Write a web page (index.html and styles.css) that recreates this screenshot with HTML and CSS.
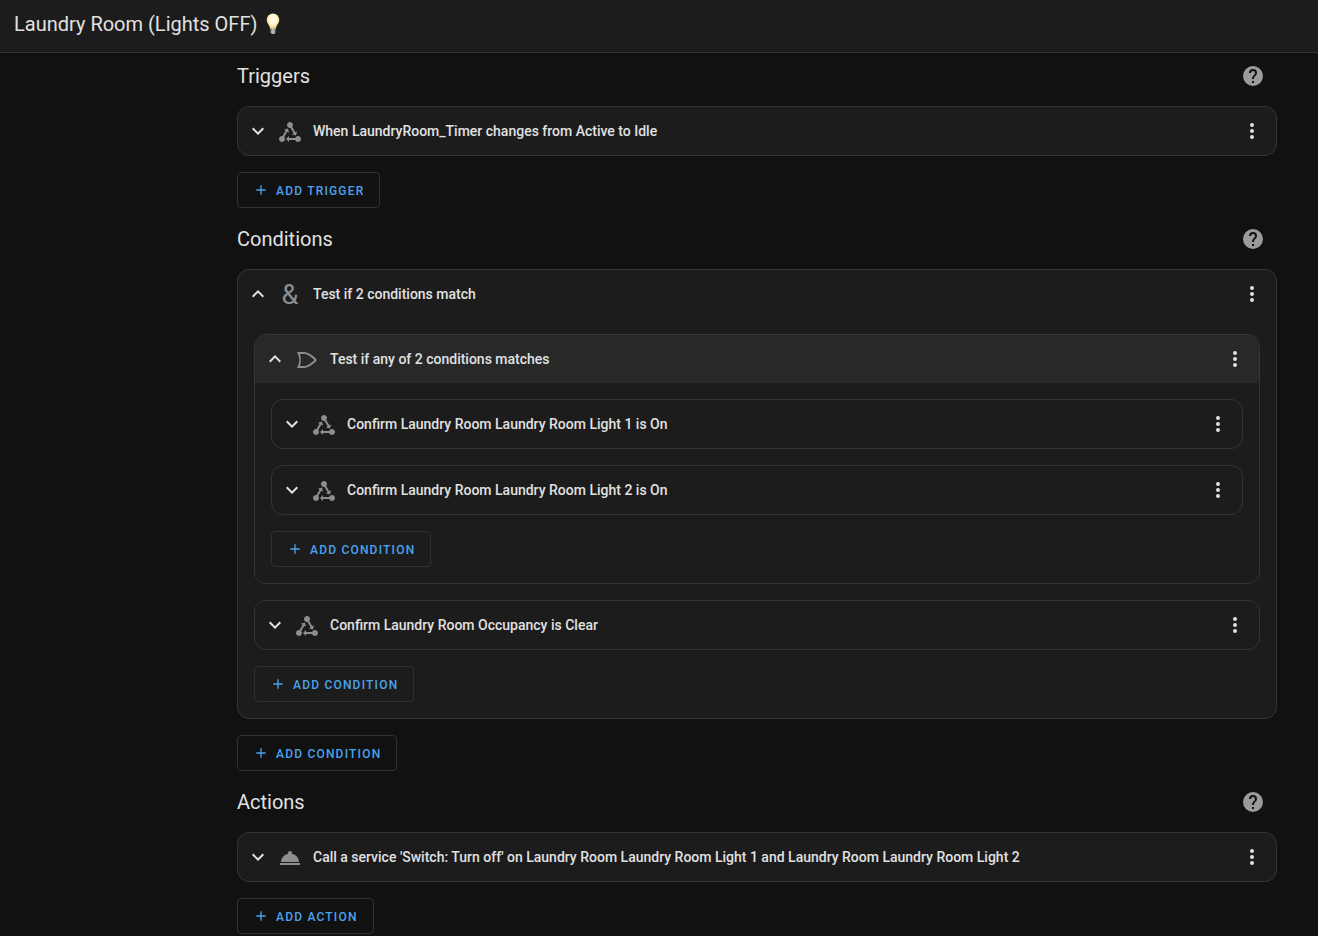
FILE: index.html
```html
<!DOCTYPE html>
<html lang="en">
<head>
<meta charset="utf-8">
<meta name="viewport" content="width=device-width, initial-scale=1">
<title>Laundry Room (Lights OFF)</title>
<link rel="stylesheet" href="styles.css">
</head>
<body>
<svg class="sprite" aria-hidden="true">
  <symbol id="down" viewBox="0 0 24 24"><path d="M7.41 8.58L12 13.17l4.59-4.59L18 10l-6 6-6-6 1.41-1.42z"/></symbol>
  <symbol id="up" viewBox="0 0 24 24"><path d="M7.41 15.41L12 10.83l4.59 4.58L18 14l-6-6-6 6 1.41 1.41z"/></symbol>
  <symbol id="dots" viewBox="0 0 24 24"><path d="M12 16a2 2 0 1 1 0 4 2 2 0 0 1 0-4m0-6a2 2 0 1 1 0 4 2 2 0 0 1 0-4m0-6a2 2 0 1 1 0 4 2 2 0 0 1 0-4z"/></symbol>
  <symbol id="plus" viewBox="0 0 24 24"><path d="M19 13h-6v6h-2v-6H5v-2h6V5h2v6h6v2z"/></symbol>
  <symbol id="help" viewBox="0 0 24 24"><path d="M15.07 11.25l-.9.92C13.45 12.89 13 13.5 13 15h-2v-.5c0-1.11.45-2.11 1.17-2.83l1.24-1.26c.37-.36.59-.86.59-1.41a2 2 0 0 0-4 0H8a4 4 0 0 1 8 0c0 .88-.36 1.67-.93 2.25M13 19h-2v-2h2M12 2a10 10 0 1 0 0 20 10 10 0 0 0 0-20z"/></symbol>
  <symbol id="state" viewBox="0 0 24 24"><path d="M6.27 17.05C6.72 17.58 7 18.25 7 19C7 20.66 5.66 22 4 22S1 20.66 1 19 2.34 16 4 16C4.18 16 4.36 16 4.53 16.05L7.6 10.69L5.86 9.7L9.95 8.58L11.07 12.67L9.33 11.68L6.27 17.05M20 16C18.7 16 17.6 16.84 17.18 18H11V16L8 19L11 22V20H17.18C17.6 21.16 18.7 22 20 22C21.66 22 23 20.66 23 19S21.66 16 20 16M12 8C12.18 8 12.36 8 12.53 7.95L15.6 13.31L13.86 14.3L17.95 15.42L19.07 11.33L17.33 12.32L14.27 6.95C14.72 6.42 15 5.75 15 5C15 3.34 13.66 2 12 2S9 3.34 9 5 10.34 8 12 8Z"/></symbol>
  <symbol id="or" viewBox="0 0 24 24"><path d="M2 4C5 10 5 14 2 20H9C13 20 19 16 22 12C19 8 13 4 9 4H2M5 6H9C11.9 6 16.5 8.7 19.3 12C16.5 15.3 12 18 9 18H5C6 14 6 10 5 6Z"/></symbol>
  <symbol id="service" viewBox="0 0 24 24"><path d="M12 5a2 2 0 0 1 2 2c0 .24-.04.47-.12.69C17.95 8.5 21 11.91 21 16H3c0-4.09 3.05-7.5 7.12-8.31A2 2 0 0 1 12 5M22 19H2v-2h20v2z"/></symbol>
</svg>
<header class="topbar">
  <h1 class="title">Laundry Room (Lights OFF)</h1>
  <svg class="bulb" viewBox="0 0 14 22" aria-hidden="true">
    <defs>
      <radialGradient id="glow" cx=".5" cy=".4" r=".6"><stop offset="0" stop-color="#fffef6"/><stop offset=".55" stop-color="#fff4cd"/><stop offset="1" stop-color="#e9c56a"/></radialGradient>
      <linearGradient id="cap"><stop offset="0" stop-color="#6f6f6c"/><stop offset=".5" stop-color="#c9c9c4"/><stop offset="1" stop-color="#6f6f6c"/></linearGradient>
    </defs>
    <path fill="url(#glow)" d="M7 .5a6.3 6.3 0 0 1 6.3 6.3c0 3.6-3 5.2-3.4 9.2H4.1C3.700 12 .7 10.400 .7 6.800A6.300 6.300 0 0 1 7 .5z"/>
    <path fill="url(#cap)" d="M4.300 15.500h5.400v4L8.500 21h-3l-1.200-1.500z"/>
  </svg>
</header>
<main class="page">
  <div class="content">
    <section class="section">
      <div class="section-head"><h2 class="heading">Triggers</h2><button class="icon-button help" aria-label="Help with triggers"><svg class="icon"><use href="#help"/></svg></button></div>
      <div class="stack">
        <article class="card"><div class="row"><button class="toggle" aria-label="Expand"><svg class="icon"><use href="#down"/></svg></button><svg class="icon kind"><use href="#state"/></svg><h3 class="label">When LaundryRoom_Timer changes from Active to Idle</h3><button class="icon-button" aria-label="Menu"><svg class="icon"><use href="#dots"/></svg></button></div></article>
        <button class="add"><svg class="add-icon"><use href="#plus"/></svg>Add trigger</button>
      </div>
    </section>
    <section class="section">
      <div class="section-head"><h2 class="heading">Conditions</h2><button class="icon-button help" aria-label="Help with conditions"><svg class="icon"><use href="#help"/></svg></button></div>
      <div class="stack">
        <article class="card">
          <div class="row"><button class="toggle" aria-label="Collapse"><svg class="icon"><use href="#up"/></svg></button><span class="kind ampersand" aria-hidden="true">&amp;</span><h3 class="label">Test if 2 conditions match</h3><button class="icon-button" aria-label="Menu"><svg class="icon"><use href="#dots"/></svg></button></div>
          <div class="stack inner">
            <article class="card">
              <div class="row raised"><button class="toggle" aria-label="Collapse"><svg class="icon"><use href="#up"/></svg></button><svg class="icon kind"><use href="#or"/></svg><h3 class="label">Test if any of 2 conditions matches</h3><button class="icon-button" aria-label="Menu"><svg class="icon"><use href="#dots"/></svg></button></div>
              <div class="stack inner">
                <article class="card"><div class="row"><button class="toggle" aria-label="Expand"><svg class="icon"><use href="#down"/></svg></button><svg class="icon kind"><use href="#state"/></svg><h3 class="label">Confirm Laundry Room Laundry Room Light 1 is On</h3><button class="icon-button" aria-label="Menu"><svg class="icon"><use href="#dots"/></svg></button></div></article>
                <article class="card"><div class="row"><button class="toggle" aria-label="Expand"><svg class="icon"><use href="#down"/></svg></button><svg class="icon kind"><use href="#state"/></svg><h3 class="label">Confirm Laundry Room Laundry Room Light 2 is On</h3><button class="icon-button" aria-label="Menu"><svg class="icon"><use href="#dots"/></svg></button></div></article>
                <button class="add"><svg class="add-icon"><use href="#plus"/></svg>Add condition</button>
              </div>
            </article>
            <article class="card"><div class="row"><button class="toggle" aria-label="Expand"><svg class="icon"><use href="#down"/></svg></button><svg class="icon kind"><use href="#state"/></svg><h3 class="label">Confirm Laundry Room Occupancy is Clear</h3><button class="icon-button" aria-label="Menu"><svg class="icon"><use href="#dots"/></svg></button></div></article>
            <button class="add"><svg class="add-icon"><use href="#plus"/></svg>Add condition</button>
          </div>
        </article>
        <button class="add"><svg class="add-icon"><use href="#plus"/></svg>Add condition</button>
      </div>
    </section>
    <section class="section">
      <div class="section-head"><h2 class="heading">Actions</h2><button class="icon-button help" aria-label="Help with actions"><svg class="icon"><use href="#help"/></svg></button></div>
      <div class="stack">
        <article class="card"><div class="row"><button class="toggle" aria-label="Expand"><svg class="icon"><use href="#down"/></svg></button><svg class="icon kind"><use href="#service"/></svg><h3 class="label">Call a service 'Switch: Turn off' on Laundry Room Laundry Room Light 1 and Laundry Room Laundry Room Light 2</h3><button class="icon-button" aria-label="Menu"><svg class="icon"><use href="#dots"/></svg></button></div></article>
        <button class="add"><svg class="add-icon"><use href="#plus"/></svg>Add action</button>
      </div>
    </section>
  </div>
</main>
</body>
</html>
```

FILE: styles.css
```css
* { box-sizing: border-box; }
body {
  margin: 0;
  background: #111111;
  color: #e1e1e1;
  font-family: Roboto, sans-serif;
  font-size: 14px;
}
button { margin: 0; padding: 0; border: 0; background: none; color: inherit; font: inherit; cursor: pointer; }
h1, h2, h3 { margin: 0; }
.sprite { display: none; }
.icon { display: block; width: 24px; height: 24px; fill: currentColor; }

.topbar {
  display: flex;
  align-items: center;
  gap: 9px;
  padding: 8px 14px 12px;
  min-height: 53px;
  background: #1c1c1c;
  border-bottom: 1px solid #353535;
}
.title { font-size: 20px; font-weight: 400; line-height: 32px; }
.bulb { width: 14px; height: 22px; }

.page { padding-left: 196px; }
.content { max-width: 1040px; margin: 0 auto; }
.section { display: flow-root; }
.section + .section { padding-top: 8px; }
.section-head {
  display: flex;
  align-items: center;
  justify-content: space-between;
  height: 46px;
  margin-bottom: 7px;
}
.heading { font-size: 20px; font-weight: 400; line-height: 28px; }

.stack { display: flex; flex-direction: column; align-items: stretch; gap: 16px; }
.inner { padding: 16px; }
.card {
  overflow: hidden;
  background: #1c1c1c;
  border: 1px solid #353535;
  border-radius: 12px;
}
.row { display: flex; align-items: center; min-height: 48px; padding-left: 8px; }
.raised { background: #282828; }
.toggle { flex: none; }
.kind { flex: none; margin: 2px 11px 0 8px; color: #8e8e8e; }
.ampersand { width: 24px; font-size: 27px; line-height: 26px; text-align: center; }
.label { flex: 1; min-width: 0; font-size: 14px; font-weight: 500; line-height: 20px; }
.icon-button { display: grid; flex: none; place-items: center; width: 48px; height: 46px; }
.help { color: #9b9b9b; }

.add {
  display: flex;
  align-items: center;
  align-self: flex-start;
  gap: 7px;
  height: 36px;
  padding: 2px 15px 0;
  border: 1px solid #303030;
  border-radius: 4px;
  color: #4ba3ec;
  font-size: 12px;
  font-weight: 500;
  letter-spacing: 0.1em;
  text-transform: uppercase;
}
.add-icon { width: 16px; height: 16px; margin-bottom: 2px; fill: currentColor; }
```
